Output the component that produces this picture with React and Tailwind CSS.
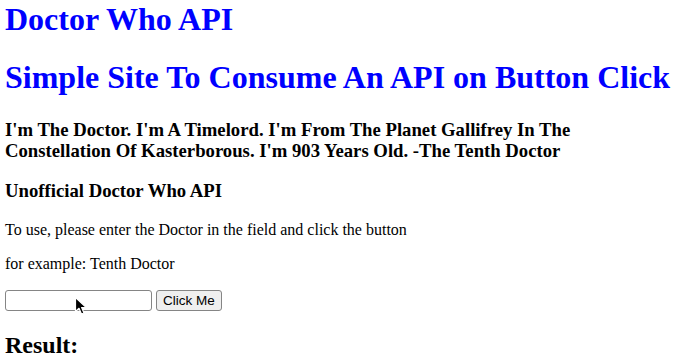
import { useState } from "react";

function App() {
  const [doctor, setDoctor] = useState("");

  return (
    <div className="relative min-h-screen bg-white pl-[5px] pt-px font-['Liberation_Serif',serif] text-black">

      <h1 className="text-[32px] font-bold leading-[37px] text-[#0000ff] mb-[21px]">
        Doctor Who API
      </h1>

      <h1 className="text-[32px] font-bold leading-[37px] text-[#0000ff] mb-[23px]">
        Simple Site To Consume An API on Button Click
      </h1>

      <h3 className="text-[18.72px] font-bold leading-[21px] mb-[19px]">
        I'm The Doctor. I'm A Timelord. I'm From The Planet Gallifrey In The Constellation Of Kasterborous. I'm 903 Years Old. -The Tenth Doctor
      </h3>

      <h3 className="text-[18.72px] font-bold leading-[21px] mb-5">
        Unofficial Doctor Who API
      </h3>

      <p className="text-base leading-[18px] mb-4">
        To use, please enter the Doctor in the field and click the button
      </p>

      <p className="text-base leading-[18px] mb-[17px]">
        for example: Tenth Doctor
      </p>

      <div className="flex items-center gap-1 mb-5">
        <input
          type="text"
          value={doctor}
          onChange={(e) => setDoctor(e.target.value)}
          className="w-[147px] h-[21px] border border-[#858585] rounded-[3px] bg-white px-1"
        />
        <button className="w-[66px] h-[21px] border border-[#858585] rounded-[3px] bg-[#efefef] font-['Liberation_Sans',sans-serif] text-[13.5px] leading-none">
          Click Me
        </button>
      </div>

      <h2 className="text-2xl font-bold leading-[28px]">
        Result:
      </h2>

      <svg
        className="absolute left-[74px] top-[296px]"
        width="13"
        height="20"
        viewBox="0 0 13 20"
      >
        <path
          d="M1.5 1.5 L1.5 15.5 L5 12.3 L7.5 18 L10 17 L7.6 11.5 L12 11.3 Z"
          fill="#000"
          stroke="#fff"
          strokeWidth="1.2"
          strokeLinejoin="round"
        />
      </svg>

    </div>
  );
}

export default App;
